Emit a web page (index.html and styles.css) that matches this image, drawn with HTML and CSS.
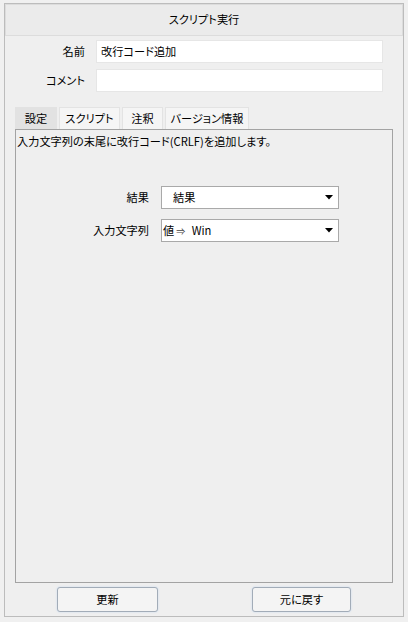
FILE: index.html
```html
<!DOCTYPE html>
<html lang="ja">
<head>
<meta charset="utf-8">
<link rel="stylesheet" href="styles.css">
</head>
<body>
<div class="frame">
  <div class="header">スクリプト実行</div>
  <div class="form">
    <label class="lbl">名前</label>
    <div class="input">改行コード追加</div>
    <label class="lbl">コメント</label>
    <div class="input"></div>
  </div>
  <div class="tabs">
    <div class="tab active t1">設定</div>
    <div class="tab t2">スクリプト</div>
    <div class="tab t3">注釈</div>
    <div class="tab t4">バージョン情報</div>
  </div>
  <div class="panel">
    <div class="desc">入力文字列の末尾に改行コード(CRLF)を追加します。</div>
    <div class="params">
      <div class="plbl">結果</div>
      <div class="combo"><span class="ctext pad">結果</span><svg class="arrow" width="8" height="5" viewBox="0 0 8 5"><path d="M0 0H8L4 4.5Z" fill="#000"/></svg></div>
      <div class="plbl">入力文字列</div>
      <div class="combo"><span class="ctext">値<span class="impl">⇒</span> Win</span><svg class="arrow" width="8" height="5" viewBox="0 0 8 5"><path d="M0 0H8L4 4.5Z" fill="#000"/></svg></div>
    </div>
  </div>
  <div class="buttons">
    <button class="btn b1">更新</button>
    <button class="btn b2">元に戻す</button>
  </div>
</div>
</body>
</html>
```
FILE: styles.css
```css
* { box-sizing: border-box; }
html, body { margin: 0; padding: 0; }
body {
  background: #f0f0f0;
  font-family: "Noto Sans CJK JP", "Noto Sans", sans-serif;
  font-size: 11.2px;
  font-weight: 400;
  font-feature-settings: "palt";
  color: #000;
  width: 408px;
  height: 622px;
  padding: 3px 0 0 4px;
}
.frame {
  width: 400px;
  height: 614px;
  border: 1px solid #bcbcbc;
  background: #efefef;
  display: flex;
  flex-direction: column;
}
.header {
  height: 32px;
  background: #ebebeb;
  border: 1px solid #dcdcdc;
  display: flex;
  align-items: center;
  justify-content: center;
  line-height: 1;
  padding-bottom: 1px;
}
.form {
  margin-top: 4px;
  display: grid;
  grid-template-columns: 80px 287px;
  column-gap: 11px;
  row-gap: 6px;
  align-items: center;
}
.lbl { text-align: right; line-height: 1; }
.input {
  height: 23px;
  background: #fff;
  border: 1px solid #e6e6e6;
  padding: 0 4px;
  display: flex;
  align-items: center;
  line-height: 1;
}
.tabs {
  margin: 15px 0 0 10px;
  display: flex;
  gap: 2px;
  height: 22px;
}
.tab {
  height: 22px;
  display: flex;
  align-items: center;
  justify-content: center;
  line-height: 1;
  background: #f5f5f5;
  border: 1px solid #e3e3e3;
  border-bottom: none;
}
.tab.active { background: #e2e2e2; border-color: #e2e2e2; }
.t1 { width: 42px; }
.t2 { width: 61px; }
.t3 { width: 41px; }
.t4 { width: 84px; }
.panel {
  margin: 0 10px 0 10px;
  height: 454px;
  border: 1px solid #a3a3a3;
  background: #efefef;
  padding: 4px 1px 0 1px;
}
.desc { line-height: 14px; }
.params {
  margin-top: 38px;
  display: grid;
  grid-template-columns: 132px 178px;
  column-gap: 12px;
  row-gap: 10px;
  align-items: center;
}
.plbl { text-align: right; line-height: 1; }
.combo {
  height: 23px;
  background: #fff;
  border: 1px solid #a9a9a9;
  display: flex;
  align-items: center;
  justify-content: space-between;
  padding: 0 5px 0 0;
  line-height: 1;
}
.ctext { padding-left: 1px; }
.ctext.pad { padding-left: 11px; }
.impl { font-size: 9px; margin: 0 4px 0 2px; color: #444; }
.arrow { display: block; }
.buttons {
  flex: 1;
  display: flex;
  align-items: flex-start;
  padding-top: 4px;
}
.btn {
  height: 25px;
  font: inherit;
  font-feature-settings: "palt";
  color: #000;
  background: #f4f4f4;
  border: 1px solid #a2acb8;
  border-radius: 3px;
  box-shadow: 0 0 2px #c4d8f0;
  padding: 0;
  line-height: 1;
}
.b1 { width: 101px; margin-left: 52px; }
.b2 { width: 99px; margin-left: 94px; }
```
